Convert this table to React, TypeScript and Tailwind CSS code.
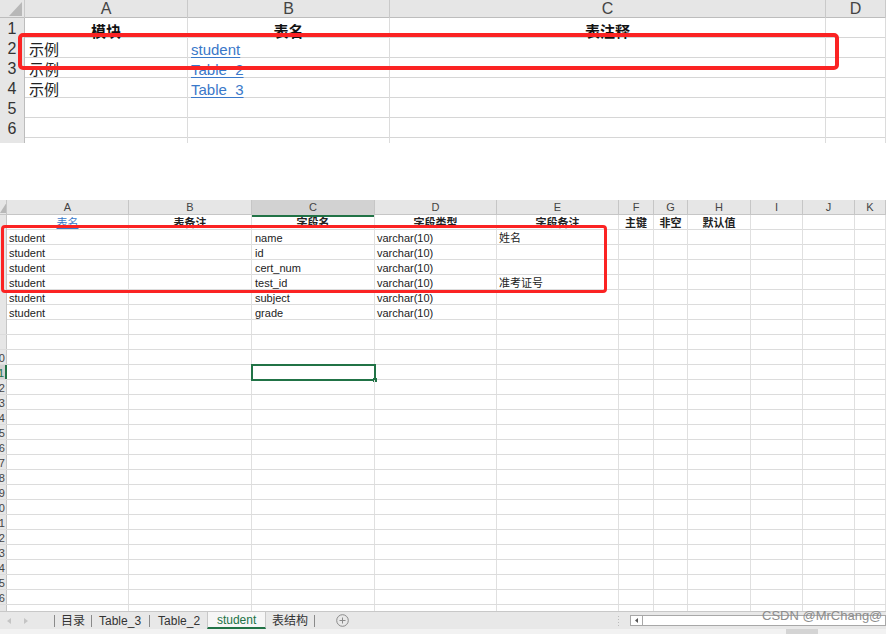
import React from "react"

const topCols = "grid grid-cols-[25px_163px_202px_436px_60px]"
const subCols = "grid grid-cols-[7px_122px_123px_123px_122px_122px_35px_34px_63px_52px_52px_31px]"

const topRows: { a?: string; b?: string; c?: string; head?: boolean }[] = [
  { a: "模块", b: "表名", c: "表注释", head: true },
  { a: "示例", b: "student" },
  { a: "示例", b: "Table_2" },
  { a: "示例", b: "Table_3" },
  {},
  {},
]

const fields = [
  ["name", "姓名"],
  ["id", ""],
  ["cert_num", ""],
  ["test_id", "准考证号"],
  ["subject", ""],
  ["grade", ""],
]

const subLetters = ["A", "B", "C", "D", "E", "F", "G", "H", "I", "J", "K"]

function TopSheet() {
  return (
    <div className="h-[143px] overflow-hidden">
      <div className={`${topCols} h-[18px] bg-[#e6e6e6] border-b border-[#bdbdbd] text-[16px] leading-[18px] text-[#444]`}>
        <div className="relative border-r border-[#c9c9c9]">
          <svg className="absolute left-[9px] top-[2px]" width="13" height="14" viewBox="0 0 13 14">
            <path d="M13 0 L13 14 L0 14 Z" fill="#b8b8b8" />
          </svg>
        </div>
        {["A", "B", "C", "D"].map((l) => (
          <div key={l} className="border-r border-[#c9c9c9] text-center">{l}</div>
        ))}
      </div>
      {topRows.map((r, i) => (
        <div key={i} className={`${topCols} h-[20px] border-b border-[#d6d6d6]`}>
          <div className="bg-[#e6e6e6] border-r border-[#bdbdbd] text-center text-[16px] leading-[22px] text-[#333]">{i + 1}</div>
          {r.head ? (
            <>
              <div className="border-r border-[#dcdcdc] text-center text-[15px] font-bold leading-[20px] pt-[4px] text-[#111] whitespace-nowrap">{r.a}</div>
              <div className="border-r border-[#dcdcdc] text-center text-[15px] font-bold leading-[20px] pt-[4px] text-[#111] whitespace-nowrap">{r.b}</div>
              <div className="border-r border-[#dcdcdc] text-center text-[15px] font-bold leading-[20px] pt-[4px] text-[#111] whitespace-nowrap">{r.c}</div>
            </>
          ) : (
            <>
              <div className="border-r border-[#dcdcdc] pl-[4px] text-[15px] leading-[24px] text-[#222] whitespace-nowrap">{r.a}</div>
              <div className="border-r border-[#dcdcdc] pl-[3px] text-[15px] leading-[24px] whitespace-nowrap">
                {r.b && <span className="text-[#3a78c9] underline underline-offset-2">{r.b}</span>}
              </div>
              <div className="border-r border-[#dcdcdc]" />
            </>
          )}
          <div className="border-r border-[#dcdcdc]" />
        </div>
      ))}
      <div className={`${topCols} h-[5px]`}>
        <div className="bg-[#e6e6e6] border-r border-[#bdbdbd]" />
        <div className="border-r border-[#dcdcdc]" />
        <div className="border-r border-[#dcdcdc]" />
        <div className="border-r border-[#dcdcdc]" />
        <div className="border-r border-[#dcdcdc]" />
      </div>
    </div>
  )
}

function RowNum({ n, active }: { n: number; active?: boolean }) {
  return (
    <div
      className={`flex justify-end overflow-hidden border-r text-[11px] leading-[16px] ${
        active ? "bg-[#d2d2d2] border-[#217346] border-r-2 text-[#217346]" : "bg-[#e6e6e6] border-[#c6c6c6] text-[#444]"
      }`}
    >
      <span className={`whitespace-nowrap ${n < 10 ? "mr-[9px]" : "mr-[1px]"}`}>{n}</span>
    </div>
  )
}

function SubSheet() {
  const rows = Array.from({ length: 26 }, (_, i) => i + 1)
  return (
    <div className="relative text-[#222]">
      <div className={`${subCols} h-[15px] bg-[#e6e6e6] border-b border-[#c6c6c6] text-[11px] leading-[15px] text-[#444]`}>
        <div className="relative border-r border-[#c6c6c6] overflow-hidden">
          <svg className="absolute left-0 top-[2px]" width="7" height="11" viewBox="0 0 7 11">
            <path d="M7 0 L7 11 L0 11 Z" fill="#b8b8b8" />
          </svg>
        </div>
        {subLetters.map((l) => (
          <div
            key={l}
            className={`text-center border-r border-[#c6c6c6] ${l === "C" ? "bg-[#d2d2d2] border-b-2 border-b-[#217346]" : ""}`}
          >
            {l}
          </div>
        ))}
      </div>
      {rows.map((n) => {
        const f = n >= 2 && n <= 7 ? fields[n - 2] : null
        return (
          <div key={n} className={`${subCols} h-[15px] border-b border-[#dcdcdc] text-[11px] leading-[17px] whitespace-nowrap`}>
            <RowNum n={n} active={n === 11} />
            {n === 1 ? (
              <>
                <div className="border-r border-[#e0e0e0] text-center text-[#3a78c9] underline">表名</div>
                <div className="border-r border-[#e0e0e0] text-center font-bold">表备注</div>
                <div className="border-r border-[#e0e0e0] text-center font-bold">字段名</div>
                <div className="border-r border-[#e0e0e0] text-center font-bold">字段类型</div>
                <div className="border-r border-[#e0e0e0] text-center font-bold">字段备注</div>
                <div className="border-r border-[#e0e0e0] text-center font-bold">主键</div>
                <div className="border-r border-[#e0e0e0] text-center font-bold">非空</div>
                <div className="border-r border-[#e0e0e0] text-center font-bold">默认值</div>
              </>
            ) : (
              <>
                <div className="border-r border-[#e0e0e0] pl-[2px]">{f ? "student" : ""}</div>
                <div className="border-r border-[#e0e0e0]" />
                <div className="relative border-r border-[#e0e0e0] pl-[3px]">
                  {f ? f[0] : ""}
                  {n === 11 && (
                    <div className="absolute -left-[1px] -top-[1px] w-[125px] h-[17px] border-2 border-[#217346]">
                      <div className="absolute -right-[3px] -bottom-[3px] w-[4px] h-[4px] bg-[#217346]" />
                    </div>
                  )}
                </div>
                <div className="border-r border-[#e0e0e0] pl-[2px]">{f ? "varchar(10)" : ""}</div>
                <div className="border-r border-[#e0e0e0] pl-[2px]">{f ? f[1] : ""}</div>
                <div className="border-r border-[#e0e0e0]" />
                <div className="border-r border-[#e0e0e0]" />
                <div className="border-r border-[#e0e0e0]" />
              </>
            )}
            <div className="border-r border-[#e0e0e0]" />
            <div className="border-r border-[#e0e0e0]" />
            <div className="border-r border-[#e0e0e0]" />
          </div>
        )
      })}
      <div className={`${subCols} h-[6px]`}>
        <div className="bg-[#e6e6e6] border-r border-[#c6c6c6]" />
        {subLetters.map((l) => (
          <div key={l} className="border-r border-[#e0e0e0]" />
        ))}
      </div>
    </div>
  )
}

function Sep() {
  return <span className="block w-px h-[12px] bg-[#8a8a8a]" />
}

function TabBar() {
  return (
    <div className="relative">
      <div className="h-[18px] border-t border-[#c8c8c8] bg-[#e8e8e8] flex items-center text-[12px] text-[#333] whitespace-nowrap">
        <svg className="ml-[7px] shrink-0" width="4" height="6" viewBox="0 0 4 6"><path d="M4 0 L0 3 L4 6 Z" fill="#c4c4c4" /></svg>
        <svg className="ml-[13px] shrink-0" width="4" height="6" viewBox="0 0 4 6"><path d="M0 0 L4 3 L0 6 Z" fill="#c4c4c4" /></svg>
        <span className="ml-[26px] shrink-0"><Sep /></span>
        <span className="ml-[6px] shrink-0">目录</span>
        <span className="ml-[6px] shrink-0"><Sep /></span>
        <span className="ml-[7px] shrink-0">Table_3</span>
        <span className="ml-[8px] shrink-0"><Sep /></span>
        <span className="ml-[8px] shrink-0">Table_2</span>
        <div className="ml-[7px] h-full w-[59px] shrink-0 bg-[#f6f6f6] border-b-2 border-[#217346] border-r border-r-[#c8c8c8] border-l border-l-[#c8c8c8] flex items-center justify-center text-[#217346]">
          student
        </div>
        <span className="ml-[6px] shrink-0">表结构</span>
        <span className="ml-[6px] shrink-0"><Sep /></span>
        <svg className="ml-[21px] shrink-0" width="13" height="13" viewBox="0 0 13 13">
          <circle cx="6.5" cy="6.5" r="5.8" fill="none" stroke="#8a8a8a" strokeWidth="1" />
          <path d="M6.5 3.5 V9.5 M3.5 6.5 H9.5" stroke="#8a8a8a" strokeWidth="1" />
        </svg>
        <span className="ml-[269px] shrink-0 flex flex-col gap-[2px]">
          <span className="w-px h-[1px] bg-[#bbb]" />
          <span className="w-px h-[1px] bg-[#bbb]" />
          <span className="w-px h-[1px] bg-[#bbb]" />
          <span className="w-px h-[1px] bg-[#bbb]" />
        </span>
        <div className="ml-[11px] shrink-0 w-[13px] h-[11px] border border-[#a8a8a8] bg-white flex items-center justify-center">
          <svg width="3" height="5" viewBox="0 0 3 5"><path d="M3 0 L0 2.5 L3 5 Z" fill="#555" /></svg>
        </div>
        <div className="flex-1 h-[11px] border border-l-0 border-[#a8a8a8] bg-white" />
      </div>
      <div className="h-[5px] bg-[#f2f2f2] flex">
        <div className="ml-[786px] w-[32px] h-full bg-[#d4d4d4]" />
      </div>
      <div className="absolute left-[762px] top-[-2px] text-[13px] leading-[14px] text-[#8c8c8c] font-['Liberation_Sans',sans-serif]">
        CSDN @MrChang@
      </div>
    </div>
  )
}

export default function App() {
  return (
    <div className="relative w-[893px] h-[634px] overflow-hidden bg-white font-['Liberation_Sans','Noto_Sans_CJK_SC',sans-serif]">
      <div className="w-[886px]">
        <TopSheet />
        <div className="h-[57px]" />
        <SubSheet />
        <TabBar />
      </div>
      {/* red highlight boxes */}
      <div className="absolute left-[18px] top-[33px] w-[821px] h-[37px] border-[4px] border-[#fb2323] rounded-[5px]" />
      <div className="absolute left-[1px] top-[225px] w-[606px] h-[68px] border-[3px] border-[#fb2323] rounded-[4px]" />
    </div>
  )
}
